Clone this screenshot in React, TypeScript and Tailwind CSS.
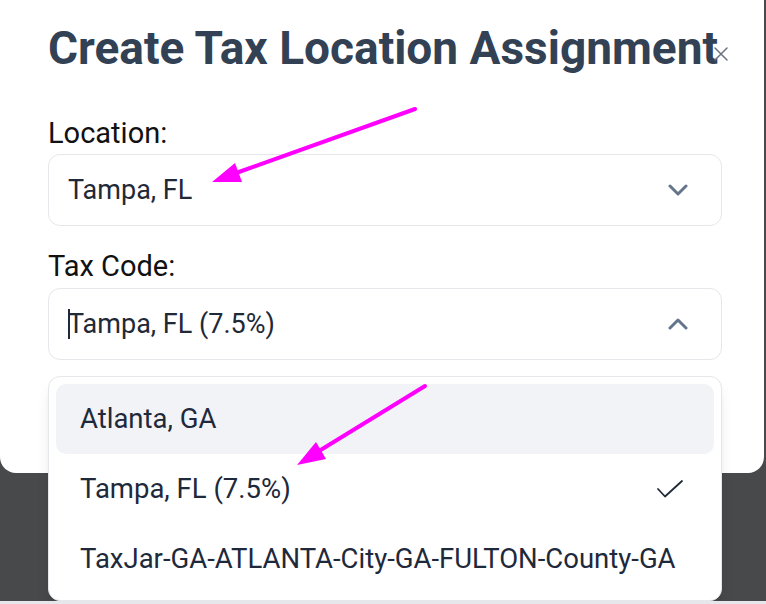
import { ChevronDown, ChevronUp, X, Check } from "lucide-react";

const options = [
  { label: "Atlanta, GA", active: true, selected: false },
  { label: "Tampa, FL (7.5%)", active: false, selected: true },
  { label: "TaxJar-GA-ATLANTA-City-GA-FULTON-County-GA", active: false, selected: false },
];

const Chevron = ({ up }: { up?: boolean }) => (
  <svg width="20" height="12" viewBox="0 0 20 12" fill="none" stroke="#64748b" strokeWidth="3" strokeLinecap="round" strokeLinejoin="round">
    {up ? <path d="M2 10 10 2l8 8" /> : <path d="M2 2l8 8 8-8" />}
  </svg>
);

const App = () => {
  return (
    <div className="relative w-[766px] h-[604px] overflow-hidden bg-[#48494b] font-['Roboto',sans-serif]">
      {/* modal */}
      <div className="relative w-[764px] h-[473px] bg-white rounded-b-[16px] pl-12 pr-[42px]">
        <h2 className="pt-[25px] text-[46px] leading-none font-bold text-[#334155] whitespace-nowrap">
          Create Tax Location Assignment
        </h2>
        <button className="absolute left-[713px] top-[46px] text-[#6b7280]">
          <svg width="16" height="16" viewBox="0 0 16 16" fill="none" stroke="currentColor" strokeWidth="1.5" strokeLinecap="round">
            <path d="M2 2l12 12M14 2 2 14" />
          </svg>
        </button>

        <label className="block mt-[48px] text-[29px] leading-none text-[#111111]">Location:</label>
        <div className="mt-[6px] h-[72px] border border-[#e5e7eb] rounded-[12px] flex items-center justify-between pl-[19px] pr-[33px]">
          <span className="text-[27px] text-[#1f2937]">Tampa, FL</span>
          <Chevron />
        </div>

        <label className="block mt-[26px] text-[29px] leading-none text-[#111111]">Tax Code:</label>
        <div className="mt-[7px] h-[72px] border border-[#e5e7eb] rounded-[12px] flex items-center justify-between pl-[19px] pr-[33px]">
          <span className="flex items-center text-[27px] text-[#1f2937]">
            <span className="inline-block w-[2px] h-[30px] bg-[#1f2937] -mr-[2px]" />
            Tampa, FL (7.5%)
          </span>
          <Chevron up />
        </div>
      </div>

      {/* dropdown list */}
      <div className="absolute left-[48px] top-[376px] w-[674px] h-[225px] bg-white border border-[#e5e7eb] rounded-[12px] shadow-lg px-[7px] pt-[7px]">
        {options.map((o) => (
          <div
            key={o.label}
            className={`h-[70px] rounded-[10px] flex items-center justify-between pl-[24px] pr-[30px] text-[27.5px] text-[#1e293b] ${o.active ? "bg-[#f2f3f6]" : ""}`}
          >
            <span className="whitespace-nowrap">{o.label}</span>
            {o.selected && (
              <svg width="28" height="20" viewBox="0 0 28 20" fill="none" stroke="#1f2937" strokeWidth="1.8" strokeLinecap="round" strokeLinejoin="round">
                <path d="M2 10l7 7.5L26 2" />
              </svg>
            )}
          </div>
        ))}
      </div>

      <div className="absolute left-0 bottom-0 w-full h-[3px] bg-[#e5e7eb]" />

      {/* annotation arrows */}
      <svg className="absolute inset-0 pointer-events-none" width="766" height="604">
        <line x1="415" y1="109" x2="236" y2="173" stroke="#ff00ff" strokeWidth="4" strokeLinecap="round" />
        <polygon points="212,182 242,182 235,163" fill="#ff00ff" />
        <line x1="425" y1="386" x2="319" y2="451" stroke="#ff00ff" strokeWidth="4" strokeLinecap="round" />
        <polygon points="297,465 326,459 316,442" fill="#ff00ff" />
      </svg>
    </div>
  );
};

export default App;
